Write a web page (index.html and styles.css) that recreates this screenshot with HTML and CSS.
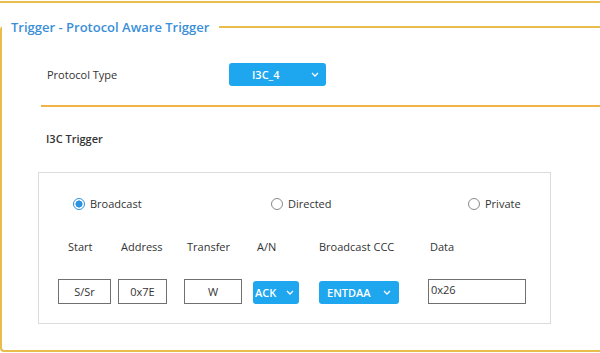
FILE: index.html
```html
<!DOCTYPE html>
<html>
<head>
<meta charset="utf-8">
<link rel="stylesheet" href="styles.css">
</head>
<body>
<div class="prev-edge"></div>
<fieldset class="panel">
  <legend class="panel-title">Trigger - Protocol Aware Trigger</legend>
  <div class="protocol-row">
    <span class="label protocol-label">Protocol Type</span>
    <div class="dropdown protocol-dd">
      <span class="dd-text">I3C_4</span>
      <svg class="chev" width="8" height="5" viewBox="0 0 8 5"><path d="M1 1 L4 4 L7 1" fill="none" stroke="#fff" stroke-width="1.3"/></svg>
    </div>
  </div>
  <div class="separator"></div>
  <div class="section-title">I3C Trigger</div>
  <div class="trigger-box">
    <div class="radio-row">
      <label class="radio"><span class="radio-dot checked"></span><span>Broadcast</span></label>
      <label class="radio"><span class="radio-dot"></span><span>Directed</span></label>
      <label class="radio"><span class="radio-dot"></span><span>Private</span></label>
    </div>
    <div class="field-grid">
      <span class="hdr h-start">Start</span>
      <span class="hdr h-addr">Address</span>
      <span class="hdr h-xfer">Transfer</span>
      <span class="hdr h-an">A/N</span>
      <span class="hdr h-ccc">Broadcast CCC</span>
      <span class="hdr h-data">Data</span>

      <div class="box-input w-start">S/Sr</div>
      <div class="box-input w-addr">0x7E</div>
      <div class="box-input w-xfer">W</div>
      <div class="dropdown small-dd w-an">
        <span class="dd-text">ACK</span>
        <svg class="chev" width="8" height="5" viewBox="0 0 8 5"><path d="M1 1 L4 4 L7 1" fill="none" stroke="#fff" stroke-width="1.3"/></svg>
      </div>
      <div class="dropdown small-dd w-ccc">
        <span class="dd-text">ENTDAA</span>
        <svg class="chev" width="8" height="5" viewBox="0 0 8 5"><path d="M1 1 L4 4 L7 1" fill="none" stroke="#fff" stroke-width="1.3"/></svg>
      </div>
      <div class="box-input data-input w-data">0x26</div>
    </div>
  </div>
</fieldset>
</body>
</html>
```
FILE: styles.css
```css
html, body {
  margin: 0;
  padding: 0;
  background: #ffffff;
}
body {
  font-family: "Open Sans", "Noto Sans", sans-serif;
  font-size: 11px;
  color: #333333;
  width: 600px;
  height: 353px;
  overflow: hidden;
}
.prev-edge {
  margin-top: 1px;
  height: 2px;
  background: #e8bd4c;
}
.panel {
  margin: 15px 0 0 0;
  padding: 0 0 26px 0;
  box-sizing: border-box;
  min-width: 0;
  border: 2px solid #e8bd4c;
  border-right: none;
  border-radius: 4px 0 0 4px;
}
.panel-title {
  padding: 0 10px 0 9px;
  margin: 0;
  font-size: 13px;
  line-height: 18px;
  font-weight: 600;
  color: #3a8fd8;
}
.protocol-row {
  display: flex;
  align-items: center;
  padding-top: 27px;
  padding-left: 45px;
}
.protocol-label {
  width: 182px;
}
.dropdown {
  display: flex;
  align-items: center;
  background: #1ea6ef;
  color: #ffffff;
  border-radius: 3px;
  font-weight: 600;
  box-sizing: border-box;
}
.protocol-dd {
  width: 97px;
  height: 23px;
  padding: 0 7px 0 23px;
  justify-content: space-between;
}
.separator {
  margin: 19px 0 0 39px;
  height: 2px;
  background: #f0b444;
}
.section-title {
  margin: 24px 0 0 44px;
  font-weight: 600;
  line-height: 15px;
}
.trigger-box {
  margin: 26px 0 0 36px;
  width: 513px;
  height: 152px;
  box-sizing: border-box;
  border: 1px solid #dcdcdc;
  padding-top: 23px;
}
.radio-row {
  display: grid;
  grid-template-columns: 198px 197px auto;
  padding-left: 34px;
  line-height: 16px;
}
.radio {
  display: flex;
  align-items: center;
  gap: 5px;
}
.radio-dot {
  width: 12px;
  height: 12px;
  box-sizing: border-box;
  border: 1px solid #8a8a8a;
  border-radius: 50%;
  background: #fff;
}
.radio-dot.checked {
  border-color: #2b93e0;
  background: radial-gradient(circle, #2b93e0 0 3.3px, #ffffff 3.8px);
}
.field-grid {
  display: grid;
  grid-template-columns: 60px 66px 69px 66px 109px 98px;
  grid-template-rows: 16px 25px;
  row-gap: 24px;
  margin-top: 27px;
  padding-left: 19px;
  align-items: end;
}
.hdr {
  line-height: 16px;
  align-self: center;
}
.h-start { padding-left: 10px; }
.h-addr { padding-left: 3px; }
.h-xfer { padding-left: 3px; }
.h-an { padding-left: 4px; }
.h-ccc { padding-left: 0; }
.h-data { padding-left: 2px; }
.box-input {
  height: 25px;
  box-sizing: border-box;
  border: 1px solid #707070;
  display: flex;
  align-items: center;
  justify-content: center;
  background: #fff;
}
.data-input {
  align-items: flex-start;
  justify-content: flex-start;
  padding: 3px 2px;
  line-height: 14px;
}
.small-dd {
  height: 23px;
  justify-content: space-between;
}
.w-start { width: 53px; }
.w-addr { width: 49px; }
.w-xfer { width: 58px; }
.w-an { width: 46px; padding: 0 5px 0 2px; }
.w-ccc { width: 80px; padding: 0 8px 0 8px; }
.w-data { width: 98px; }
```
